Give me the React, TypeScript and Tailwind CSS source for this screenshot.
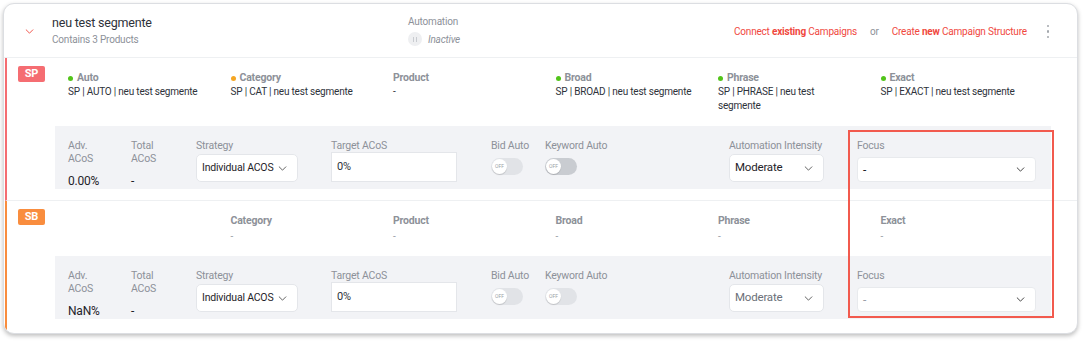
import React from "react";

const font = { fontFamily: 'Roboto, "Liberation Sans", sans-serif', letterSpacing: "-0.2px" };

function Chevron({ className = "" }: { className?: string }) {
  return (
    <svg width="9" height="5" viewBox="0 0 10 6" className={className} fill="none">
      <path d="M1 1l4 4 4-4" stroke="currentColor" strokeWidth="1.1" strokeLinecap="round" strokeLinejoin="round" />
    </svg>
  );
}

function Toggle({ dark }: { dark?: boolean }) {
  return (
    <div className={`w-[32px] h-[17px] rounded-full flex items-center pl-[1px] ${dark ? "bg-[#c9ccd1]" : "bg-[#e1e3e7]"}`}>
      <div className="w-[15px] h-[15px] rounded-full bg-white shadow-[0_1px_1px_rgba(0,0,0,0.15)] flex items-center justify-center text-[5px] text-[#9aa0a8] leading-none tracking-normal">
        OFF
      </div>
    </div>
  );
}

type Col = { label: string; dot?: string; value: string[]; empty?: boolean };

function Columns({ cols, dots }: { cols: (Col | null)[]; dots: boolean }) {
  return (
    <div className="flex">
      {cols.map((c, i) => (
        <div key={i} className="w-[162.5px] shrink-0">
          {c && (
            <>
              <div className="flex items-center h-[14px] text-[10.5px] font-bold text-[#8d9199] whitespace-nowrap">
                {dots && c.dot && <span className="w-[5px] h-[5px] rounded-full mr-[4px]" style={{ background: c.dot }} />}
                <span>{c.label}</span>
              </div>
              <div className={`text-[10px] leading-[14px] whitespace-nowrap ${c.empty ? "text-[#9aa0a8] mt-[2px]" : "text-[#2e323a] mt-[0px]"}`}>
                {c.value.map((v, j) => (
                  <div key={j}>{v}</div>
                ))}
              </div>
            </>
          )}
        </div>
      ))}
    </div>
  );
}

function Panel({ adv, keywordDark, intensityMuted, focusMuted }: { adv: string; keywordDark?: boolean; intensityMuted?: boolean; focusMuted?: boolean }) {
  return (
    <div className="bg-[#f2f3f6] h-[63px] flex pl-[13px] pt-[13px] text-[10.5px] whitespace-nowrap">
      <div className="w-[63px]">
        <div className="text-[#8d9199] leading-[13px]">Adv.</div>
        <div className="text-[#8d9199] leading-[13px]">ACoS</div>
        <div className="mt-[9px] text-[12px] text-[#1f2329] leading-[14px]">{adv}</div>
      </div>
      <div className="w-[65px]">
        <div className="text-[#8d9199] leading-[13px]">Total</div>
        <div className="text-[#8d9199] leading-[13px]">ACoS</div>
        <div className="mt-[9px] text-[12px] text-[#1f2329] leading-[14px]">-</div>
      </div>
      <div className="w-[135px]">
        <div className="text-[#8d9199] leading-[13px]">Strategy</div>
        <div className="mt-[2px] w-[102px] h-[28px] bg-white rounded-[5px] border border-[#e4e6ea] flex items-center justify-between pl-[5px] pr-[10px] text-[10.5px] text-[#1f2329]">
          <span>Individual ACOS</span>
          <Chevron className="text-[#555]" />
        </div>
      </div>
      <div className="w-[160px]">
        <div className="text-[#8d9199] leading-[13px]">Target ACoS</div>
        <div className="w-[126px] h-[30px] bg-white border border-[#e4e6ea] flex items-center pl-[5px] text-[11px] text-[#2e323a]">
          0%
        </div>
      </div>
      <div className="w-[54px]">
        <div className="text-[#8d9199] leading-[13px]">Bid Auto</div>
        <div className="mt-[6px]"><Toggle /></div>
      </div>
      <div className="w-[184px]">
        <div className="text-[#8d9199] leading-[13px]">Keyword Auto</div>
        <div className="mt-[6px]"><Toggle dark={keywordDark} /></div>
      </div>
      <div className="w-[128px]">
        <div className="text-[#8d9199] leading-[13px]">Automation Intensity</div>
        <div className="mt-[2px] w-[95px] h-[28px] bg-white rounded-[5px] border border-[#e4e6ea] flex items-center justify-between pl-[5px] pr-[10px] text-[11.5px]">
          <span className={intensityMuted ? "text-[#6b7078]" : "text-[#1f2329]"}>Moderate</span>
          <Chevron className="text-[#555]" />
        </div>
      </div>
      <div className="w-[179px]">
        <div className="text-[#8d9199] leading-[13px]">Focus</div>
        <div className="mt-[5px] w-[179px] h-[25px] bg-white rounded-[4px] border border-[#e8eaed] flex items-center justify-between pl-[5px] pr-[10px] text-[12px]">
          <span className={focusMuted ? "text-[#9aa0a8]" : "text-[#1f2329]"}>-</span>
          <Chevron className="text-[#333]" />
        </div>
      </div>
    </div>
  );
}

export default function App() {
  const spCols: Col[] = [
    { label: "Auto", dot: "#52c41a", value: ["SP | AUTO | neu test segmente"] },
    { label: "Category", dot: "#f5a623", value: ["SP | CAT | neu test segmente"] },
    { label: "Product", value: ["-"] },
    { label: "Broad", dot: "#52c41a", value: ["SP | BROAD | neu test segmente"] },
    { label: "Phrase", dot: "#52c41a", value: ["SP | PHRASE | neu test", "segmente"] },
    { label: "Exact", dot: "#52c41a", value: ["SP | EXACT | neu test segmente"] },
  ];
  const sbCols: (Col | null)[] = [
    null,
    { label: "Category", value: ["-"], empty: true },
    { label: "Product", value: ["-"], empty: true },
    { label: "Broad", value: ["-"], empty: true },
    { label: "Phrase", value: ["-"], empty: true },
    { label: "Exact", value: ["-"], empty: true },
  ];
  return (
    <div className="w-[1085px] h-[344px] bg-white pt-[3px] pl-[3px] relative" style={font}>
      <div className="w-[1075px] h-[331px] bg-white rounded-[11px] border border-[#dcdee2] shadow-[0_2px_4px_rgba(0,0,0,0.25)] overflow-hidden">
        {/* header */}
        <div className="h-[54px] flex items-center border-b border-[#eef0f2] pr-[28px] whitespace-nowrap">
          <div className="w-[48px] flex justify-center pl-[2px] pt-[2px]">
            <Chevron className="text-[#f0483e]" />
          </div>
          <div className="w-[356px]">
            <div className="text-[12.5px] text-[#2e323a] leading-[16px]">neu test segmente</div>
            <div className="text-[10px] text-[#8d9199] leading-[14px] mt-[2px]">Contains 3 Products</div>
          </div>
          <div className="w-[326px]">
            <div className="text-[10px] text-[#8d9199] leading-[14px]">Automation</div>
            <div className="flex items-center mt-[3px]">
              <div className="w-[14px] h-[14px] rounded-full bg-[#eeeff1] flex items-center justify-center gap-[1.5px]">
                <span className="w-[1.2px] h-[5px] bg-[#c8cbd0]" />
                <span className="w-[1.2px] h-[5px] bg-[#c8cbd0]" />
              </div>
              <span className="ml-[6px] italic text-[10px] text-[#8d9199]">Inactive</span>
            </div>
          </div>
          <div className="flex items-center text-[10px] text-[#f0483e] pt-[2px]">
            <span>Connect <b>existing</b> Campaigns</span>
            <span className="text-[#8d9199] mx-[13px]">or</span>
            <span>Create <b>new</b> Campaign Structure</span>
          </div>
          <div className="ml-auto flex flex-col gap-[3px] items-center pt-[2px]">
            <span className="w-[2.5px] h-[2.5px] rounded-full bg-[#a3a7ad]" />
            <span className="w-[2.5px] h-[2.5px] rounded-full bg-[#a3a7ad]" />
            <span className="w-[2.5px] h-[2.5px] rounded-full bg-[#a3a7ad]" />
          </div>
        </div>
        {/* SP */}
        <div className="border-l-2 border-[#f56d72] ml-[1px] h-[143px] border-b border-b-[#eef0f2] pr-[26px] pt-[8px]">
          <div className="flex h-[60px]">
            <div className="w-[61px] pl-[11px]">
              <div className="w-[27px] h-[16px] rounded-[2px] bg-[#f56d72] text-white text-[11px] font-bold flex items-center justify-center">SP</div>
            </div>
            <div className="pt-[5px]">
              <Columns cols={spCols} dots />
            </div>
          </div>
          <div className="ml-[48px]">
            <Panel adv="0.00%" keywordDark />
          </div>
        </div>
        {/* SB */}
        <div className="border-l-2 border-[#f98d3e] ml-[1px] h-[140px] pr-[26px] pt-[8px]">
          <div className="flex h-[47px]">
            <div className="w-[61px] pl-[11px]">
              <div className="w-[27px] h-[16px] rounded-[2px] bg-[#f98d3e] text-white text-[11px] font-bold flex items-center justify-center">SB</div>
            </div>
            <div className="pt-[5px]">
              <Columns cols={sbCols} dots={false} />
            </div>
          </div>
          <div className="ml-[48px]">
            <Panel adv="NaN%" intensityMuted focusMuted />
          </div>
        </div>
      </div>
      <div className="absolute left-[848px] top-[130px] w-[206px] h-[188px] border-2 border-[#f25a4e]" />
    </div>
  );
}
